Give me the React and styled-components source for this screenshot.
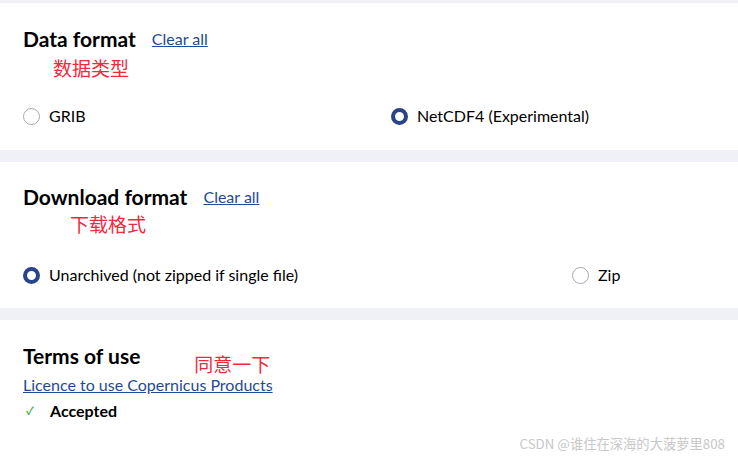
import { createGlobalStyle, styled } from "styled-components"

const GlobalStyle = createGlobalStyle`
  body {
    margin: 0;
    background: #eff1f6;
    font-family: Lato, "Noto Sans CJK SC", sans-serif;
    color: #000;
  }
`

const Page = styled.div`
  width: 738px;
  height: 457px;
  padding-top: 3px;
  display: flex;
  flex-direction: column;
  gap: 12px;
  position: relative;
  overflow: hidden;
`

const Section = styled.section`
  background: #fff;
  padding: ${(p) => p.$top}px 23px 0;
  height: ${(p) => p.$h}px;
  box-sizing: border-box;
  flex-shrink: 0;
`

const Header = styled.div`
  display: flex;
  align-items: center;
  gap: 16px;
`

const Title = styled.h2`
  margin: 0;
  font-size: 21px;
  font-weight: 700;
  line-height: 26px;
`

const LinkText = styled.a`
  display: block;
  width: fit-content;
  color: #1f4a96;
  text-decoration: underline;
  font-size: 16px;
  line-height: 20px;
  margin-top: ${(p) => p.$top || 0}px;
  cursor: pointer;
`

const Note = styled.div`
  color: #f0283c;
  font-size: 19px;
  line-height: 24px;
  margin-left: ${(p) => p.$left || 0}px;
  margin-top: ${(p) => p.$top || 0}px;
  font-family: "Noto Sans CJK SC", sans-serif;
`

const Options = styled.div`
  display: grid;
  grid-template-columns: ${(p) => p.$first}px 1fr;
  margin-top: ${(p) => p.$top}px;
`

const Option = styled.label`
  display: flex;
  align-items: center;
  gap: 9px;
  font-size: 16px;
  line-height: 20px;
`

const Radio = styled.span`
  width: 17px;
  height: 17px;
  border-radius: 50%;
  box-sizing: border-box;
  border: ${(p) => (p.$on ? "4.5px solid #2b4389" : "1.5px solid #a4a8b4")};
  background: #fff;
  flex-shrink: 0;
`

const TermsHead = styled.div`
  display: flex;
  align-items: flex-start;
  gap: 54px;
  height: 26px;
`

const Accepted = styled.div`
  display: flex;
  align-items: center;
  gap: 16px;
  margin-top: 6px;
  margin-left: 3px;
  font-size: 16px;
  line-height: 20px;
  font-weight: 700;
`

const Check = styled.span`
  color: #4caf50;
  font-size: 11px;
  width: 8px;
`

const Watermark = styled.div`
  position: absolute;
  right: 13px;
  bottom: 7px;
  color: #c8c8c8;
  font-size: 13.3px;
  font-family: "Noto Sans CJK SC", sans-serif;
`

const App = () => {
  return (
    <Page>
      <GlobalStyle />
      <Section $h={147} $top={23}>
        <Header>
          <Title>Data format</Title>
          <LinkText>Clear all</LinkText>
        </Header>
        <Note $left={30} $top={4}>数据类型</Note>
        <Options $first={368} $top={26}>
          <Option><Radio />GRIB</Option>
          <Option><Radio $on />NetCDF4 (Experimental)</Option>
        </Options>
      </Section>
      <Section $h={146} $top={22}>
        <Header>
          <Title>Download format</Title>
          <LinkText>Clear all</LinkText>
        </Header>
        <Note $left={47} $top={2}>下载格式</Note>
        <Options $first={549} $top={29}>
          <Option><Radio $on />Unarchived (not zipped if single file)</Option>
          <Option><Radio />Zip</Option>
        </Options>
      </Section>
      <Section $h={140} $top={23}>
        <TermsHead>
          <Title>Terms of use</Title>
          <Note $top={9}>同意一下</Note>
        </TermsHead>
        <LinkText $top={6}>Licence to use Copernicus Products</LinkText>
        <Accepted><Check>✓</Check>Accepted</Accepted>
      </Section>
      <Watermark>CSDN @谁住在深海的大菠萝里808</Watermark>
    </Page>
  )
}

export default App
